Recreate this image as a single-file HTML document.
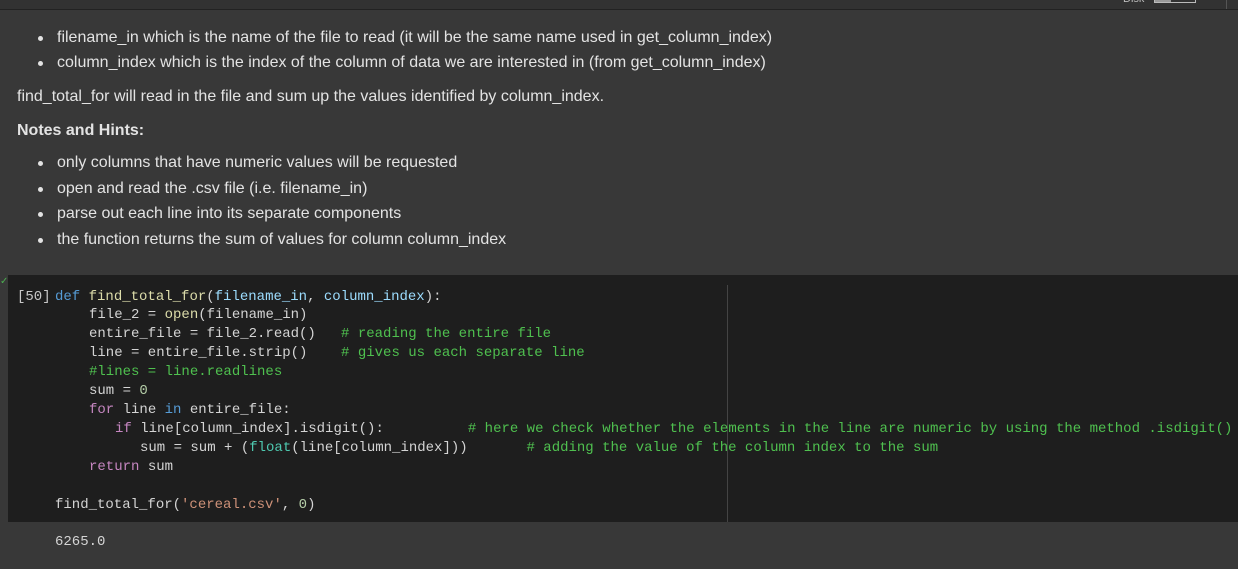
<!DOCTYPE html>
<html><head><meta charset="utf-8"><style>
html,body{margin:0;padding:0;width:1238px;height:569px;overflow:hidden;background:#383838;}
body{position:relative;font-family:"Liberation Sans",sans-serif;color:#e3e3e3;}
.top{position:absolute;left:0;top:0;width:1238px;height:9px;background:#323232;border-bottom:1px solid #222;}
.t{position:absolute;font-size:16px;white-space:pre;line-height:18px;}
.b{position:absolute;width:5px;height:5px;border-radius:50%;background:#e3e3e3;left:38px;}
.code{position:absolute;left:8px;top:275px;width:1230px;height:247px;background:#1e1e1e;}
.c{position:absolute;font-family:"Liberation Mono",monospace;font-size:14px;white-space:pre;color:#d4d4d4;line-height:19px;}
.k{color:#569cd6}.f{color:#dcdcaa}.p{color:#9cdcfe}.g{color:#4fc04f}.m{color:#c586c0}.tl{color:#4ec9b0}.s{color:#ce9178}.n{color:#b5cea8}
</style></head><body>
<div class="top"></div>
<div style="position:absolute;left:1123px;top:-7px;font-size:11px;color:#bbb">Disk</div>
<div style="position:absolute;left:1154px;top:-2px;width:40px;height:4px;border:1px solid #bbb;border-top:none"><div style="width:16px;height:4px;background:#999"></div></div>
<div style="position:absolute;left:1226px;top:0;width:1px;height:9px;background:#555"></div>

<div class="b" style="top:36px"></div><div class="t" style="left:57px;top:29px">filename_in which is the name of the file to read (it will be the same name used in get_column_index)</div>
<div class="b" style="top:61px"></div><div class="t" style="left:57px;top:54px">column_index which is the index of the column of data we are interested in (from get_column_index)</div>
<div class="t" style="left:17px;top:88px">find_total_for will read in the file and sum up the values identified by column_index.</div>
<div class="t" style="left:17px;top:122px;font-weight:bold">Notes and Hints:</div>
<div class="b" style="top:161px"></div><div class="t" style="left:57px;top:154px">only columns that have numeric values will be requested</div>
<div class="b" style="top:187px"></div><div class="t" style="left:57px;top:180px">open and read the .csv file (i.e. filename_in)</div>
<div class="b" style="top:212px"></div><div class="t" style="left:57px;top:205px">parse out each line into its separate components</div>
<div class="b" style="top:238px"></div><div class="t" style="left:57px;top:231px">the function returns the sum of values for column column_index</div>

<div class="code"></div>
<div style="position:absolute;left:0;top:276px;color:#4caf50;font-size:10px">✓</div>
<div style="position:absolute;left:727px;top:285px;width:1px;height:237px;background:#444"></div>
<div class="c" style="left:17px;top:288px;color:#c8c8c8">[50]</div>
<div class="c" style="left:55px;top:288px"><span class="k">def</span> <span class="f">find_total_for</span>(<span class="p">filename_in</span>, <span class="p">column_index</span>):</div>
<div class="c" style="left:89px;top:306px">file_2 = <span class="f">open</span>(filename_in)</div>
<div class="c" style="left:89px;top:325px">entire_file = file_2.read()   <span class="g"># reading the entire file</span></div>
<div class="c" style="left:89px;top:344px">line = entire_file.strip()    <span class="g"># gives us each separate line</span></div>
<div class="c" style="left:89px;top:363px"><span class="g">#lines = line.readlines</span></div>
<div class="c" style="left:89px;top:382px">sum = <span class="n">0</span></div>
<div class="c" style="left:89px;top:401px"><span class="m">for</span> line <span class="k">in</span> entire_file:</div>
<div class="c" style="left:115px;top:420px"><span class="m">if</span> line[column_index].isdigit():          <span class="g"># here we check whether the elements in the line are numeric by using the method .isdigit()</span></div>
<div class="c" style="left:140px;top:439px">sum = sum + (<span class="tl">float</span>(line[column_index]))       <span class="g"># adding the value of the column index to the sum</span></div>
<div class="c" style="left:89px;top:458px"><span class="m">return</span> sum</div>
<div class="c" style="left:55px;top:496px">find_total_for(<span class="s">'cereal.csv'</span>, <span class="n">0</span>)</div>
<div class="c" style="left:55px;top:533px;color:#d4d4d4">6265.0</div>
</body></html>
